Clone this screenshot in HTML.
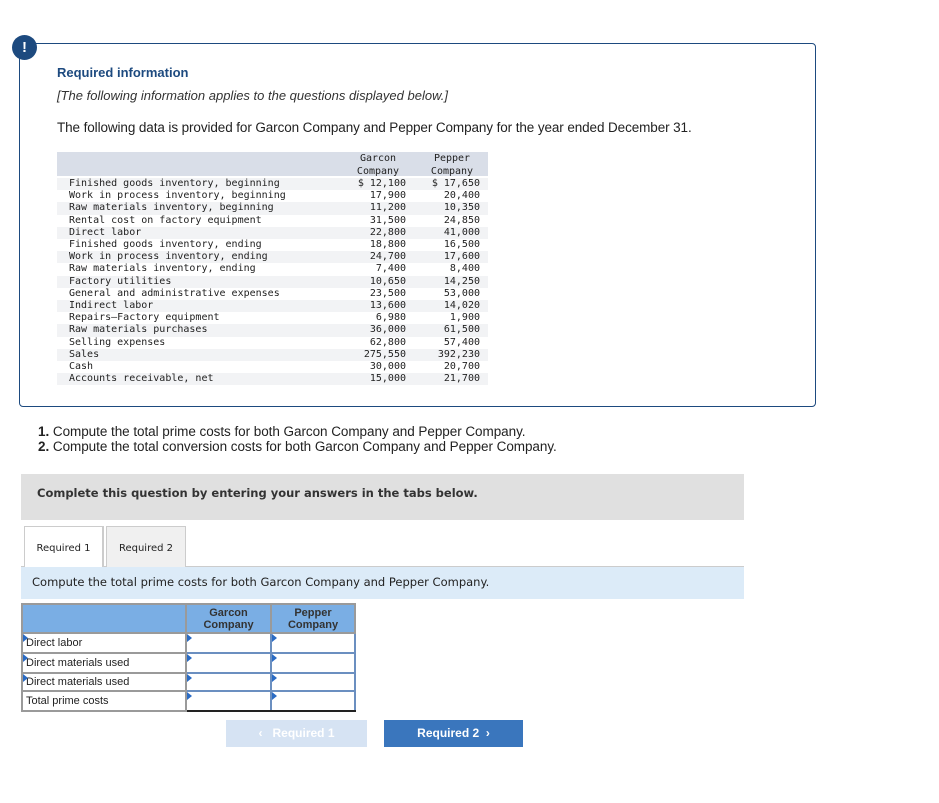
<!DOCTYPE html><html><head><style>
body{margin:0;width:939px;height:803px;background:#fff;font-family:"Liberation Sans",sans-serif;position:relative;overflow:hidden}
.abs{position:absolute}
.box{left:19px;top:43px;width:795px;height:362px;border:1.5px solid #1d4a7f;border-radius:4px}
.ic{left:12px;top:35px;width:25px;height:25px;border-radius:50%;background:#1d4a7f;color:#fff;font-weight:bold;font-size:15px;text-align:center;line-height:25px}
.mono{font-family:"DejaVu Sans Mono","Liberation Mono",monospace;font-size:10px;color:#222}
table.d{border-collapse:collapse;position:absolute;left:57px;width:431px;table-layout:fixed}
table.d td{padding:0;height:12.2px;line-height:12.2px;white-space:pre;overflow:visible}
table.d tr:nth-child(odd) td{background:#f2f3f5}
table.d td.r{text-align:right}
.tab{top:526px;height:40px;border:1px solid #ccc;border-bottom:none;font-size:10px;color:#222;line-height:43px;text-align:center;font-family:"DejaVu Sans","Liberation Sans",sans-serif}
table.a{position:absolute;left:21px;top:603px;border-collapse:collapse;font-size:11px;color:#222;table-layout:fixed;width:333px}
table.a td{border:2px solid #9a9a9a;padding:0 3px;position:relative}
table.a td.h{background:#7aaee4;text-align:center;font-weight:bold;font-size:11px;line-height:12px;color:#333}
table.a td.in{border-color:#6b8fc0;}
.tri{position:absolute;left:0;top:0;width:0;height:0;border-top:4px solid transparent;border-bottom:4px solid transparent;border-left:5px solid #2a6bc4}
</style></head><body>
<div class="abs box"></div>
<div class="abs ic">!</div>
<div class="abs" style="left:57px;top:65px;font-size:13px;font-weight:bold;color:#1d4a7f">Required information</div>
<div class="abs" style="left:57px;top:88px;font-size:13px;font-style:italic;color:#333">[The following information applies to the questions displayed below.]</div>
<div class="abs" style="left:57px;top:120px;font-size:13.5px;color:#222;letter-spacing:-0.1px">The following data is provided for Garcon Company and Pepper Company for the year ended December 31.</div>
<div class="abs" style="left:57px;top:152px;width:431px;height:24px;background:#d9dee8"></div>
<div class="abs mono" style="left:348px;top:152px;width:60px;text-align:center;line-height:13px">Garcon<br>Company</div>
<div class="abs mono" style="left:422px;top:152px;width:60px;text-align:center;line-height:13px">Pepper<br>Company</div>
<table class="d mono" style="top:178px">
<colgroup><col style="width:286px"><col style="width:63px"><col style="width:82px"></colgroup>
<tr><td style="padding-left:12px">Finished goods inventory, beginning</td><td class="r">$ 12,100</td><td class="r" style="padding-right:8px">$ 17,650</td></tr>
<tr><td style="padding-left:12px">Work in process inventory, beginning</td><td class="r">17,900</td><td class="r" style="padding-right:8px">20,400</td></tr>
<tr><td style="padding-left:12px">Raw materials inventory, beginning</td><td class="r">11,200</td><td class="r" style="padding-right:8px">10,350</td></tr>
<tr><td style="padding-left:12px">Rental cost on factory equipment</td><td class="r">31,500</td><td class="r" style="padding-right:8px">24,850</td></tr>
<tr><td style="padding-left:12px">Direct labor</td><td class="r">22,800</td><td class="r" style="padding-right:8px">41,000</td></tr>
<tr><td style="padding-left:12px">Finished goods inventory, ending</td><td class="r">18,800</td><td class="r" style="padding-right:8px">16,500</td></tr>
<tr><td style="padding-left:12px">Work in process inventory, ending</td><td class="r">24,700</td><td class="r" style="padding-right:8px">17,600</td></tr>
<tr><td style="padding-left:12px">Raw materials inventory, ending</td><td class="r">7,400</td><td class="r" style="padding-right:8px">8,400</td></tr>
<tr><td style="padding-left:12px">Factory utilities</td><td class="r">10,650</td><td class="r" style="padding-right:8px">14,250</td></tr>
<tr><td style="padding-left:12px">General and administrative expenses</td><td class="r">23,500</td><td class="r" style="padding-right:8px">53,000</td></tr>
<tr><td style="padding-left:12px">Indirect labor</td><td class="r">13,600</td><td class="r" style="padding-right:8px">14,020</td></tr>
<tr><td style="padding-left:12px">Repairs—Factory equipment</td><td class="r">6,980</td><td class="r" style="padding-right:8px">1,900</td></tr>
<tr><td style="padding-left:12px">Raw materials purchases</td><td class="r">36,000</td><td class="r" style="padding-right:8px">61,500</td></tr>
<tr><td style="padding-left:12px">Selling expenses</td><td class="r">62,800</td><td class="r" style="padding-right:8px">57,400</td></tr>
<tr><td style="padding-left:12px">Sales</td><td class="r">275,550</td><td class="r" style="padding-right:8px">392,230</td></tr>
<tr><td style="padding-left:12px">Cash</td><td class="r">30,000</td><td class="r" style="padding-right:8px">20,700</td></tr>
<tr><td style="padding-left:12px">Accounts receivable, net</td><td class="r">15,000</td><td class="r" style="padding-right:8px">21,700</td></tr>
</table>
<div class="abs" style="left:38px;top:424px;font-size:13.5px;color:#222;line-height:15px;letter-spacing:-0.05px"><b>1.</b> Compute the total prime costs for both Garcon Company and Pepper Company.<br><b>2.</b> Compute the total conversion costs for both Garcon Company and Pepper Company.</div>
<div class="abs" style="left:21px;top:474px;width:723px;height:46px;background:#e0e0e0"></div>
<div class="abs" style="left:37px;top:486px;font-size:11.5px;font-weight:bold;color:#333;font-family:'DejaVu Sans',sans-serif">Complete this question by entering your answers in the tabs below.</div>
<div class="abs" style="left:21px;top:566px;width:723px;height:1px;background:#ccc"></div>
<div class="abs tab" style="left:24px;width:77px;background:#fff;border-width:1px 2px 0 1px;height:41px">Required 1</div>
<div class="abs tab" style="left:106px;width:78px;background:#f0f0f0">Required 2</div>
<div class="abs" style="left:21px;top:567px;width:723px;height:32px;background:#dcebf8"></div>
<div class="abs" style="left:32px;top:575px;font-size:11.5px;color:#222;font-family:'DejaVu Sans',sans-serif">Compute the total prime costs for both Garcon Company and Pepper Company.</div>
<table class="a">
<colgroup><col style="width:164px"><col style="width:85px"><col style="width:84px"></colgroup>
<tr style="height:29px"><td class="h"></td><td class="h">Garcon<br>Company</td><td class="h">Pepper<br>Company</td></tr>
<tr style="height:20px"><td><span class="tri"></span>Direct labor</td><td class="in"><span class="tri"></span></td><td class="in"><span class="tri"></span></td></tr>
<tr style="height:20px"><td><span class="tri"></span>Direct materials used</td><td class="in"><span class="tri"></span></td><td class="in"><span class="tri"></span></td></tr>
<tr style="height:18px"><td><span class="tri"></span>Direct materials used</td><td class="in"><span class="tri"></span></td><td class="in"><span class="tri"></span></td></tr>
<tr style="height:20px"><td>Total prime costs</td><td class="in" style="border-bottom-color:#222"><span class="tri"></span></td><td class="in" style="border-bottom-color:#222"><span class="tri"></span></td></tr>
</table>
<div class="abs" style="left:226px;top:720px;width:141px;height:27px;background:#d6e3f3;color:#fff;font-weight:bold;font-size:12px;text-align:center;line-height:27px">‹&nbsp;&nbsp; Required 1</div>
<div class="abs" style="left:384px;top:720px;width:139px;height:27px;background:#3a76bd;color:#fff;font-weight:bold;font-size:12px;text-align:center;line-height:27px">Required 2 &nbsp;›</div>
</body></html>
